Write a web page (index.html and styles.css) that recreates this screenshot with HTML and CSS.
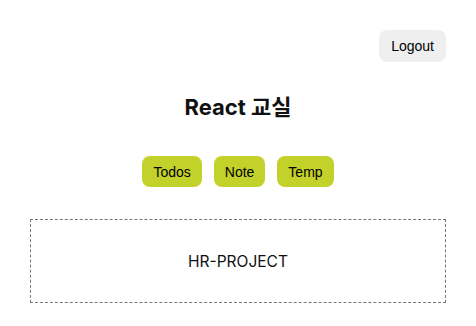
FILE: index.html
```html
<!DOCTYPE html>
<html>
<head>
    <meta charset="UTF-8">
    <link rel="stylesheet" href="styles.css">
</head>
<body>
    <div class="header">
        <button class="logout">Logout</button>
    </div>
    <h1 class="title">React 교실</h1>
    <ul class="tabs">
        <li><button class="tab">Todos</button></li>
        <li><button class="tab">Note</button></li>
        <li><button class="tab">Temp</button></li>
    </ul>
    <div class="content">
        HR-PROJECT
    </div>
</body>
</html>
```

FILE: styles.css
```css
body {
    margin: 0;
    font-family: Inter, "Noto Sans CJK KR", sans-serif;
    color: #111;
    background-color: #fff;
}

.header {
    display: flex;
    justify-content: flex-end;
    padding: 30px 30px 0 30px;
}

.logout {
    font-family: "Liberation Sans", Arial, sans-serif;
    font-size: 14px;
    height: 32px;
    padding: 0 12px;
    border: none;
    border-radius: 8px;
    background-color: #efefef;
    color: #000;
}

.title {
    margin: 32px 0 0 0;
    font-size: 22px;
    line-height: 26px;
    font-weight: 700;
    text-align: center;
}

.tabs {
    list-style-type: none;
    margin: 36px 0 0 0;
    padding: 0;
    display: flex;
    justify-content: center;
    gap: 12px;
}

.tab {
    font-family: "Liberation Sans", Arial, sans-serif;
    font-size: 14px;
    height: 31px;
    padding: 0 11px;
    border: none;
    border-radius: 8px;
    background-color: #c3d22b;
    color: #000;
}

.content {
    margin: 32px 30px 0 30px;
    height: 84px;
    box-sizing: border-box;
    border: 1px dashed #777;
    display: flex;
    align-items: center;
    justify-content: center;
    font-size: 15.5px;
}
```
